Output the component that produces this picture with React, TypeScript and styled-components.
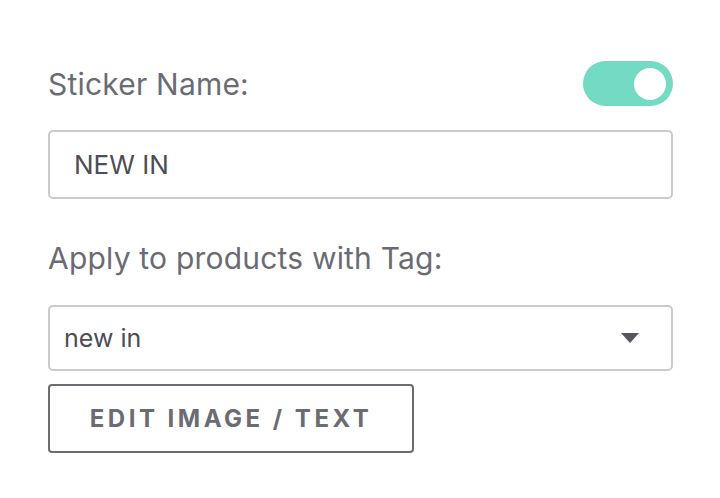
import React from "react";
import styled, { createGlobalStyle } from "styled-components";

const Global = createGlobalStyle`
  html, body { margin: 0; padding: 0; background: #ffffff; }
  body { font-family: Inter, "Noto Sans", sans-serif; }
`;

const Panel = styled.div`
  width: 625px;
  padding: 61px 0 0 48px;
  display: flex;
  flex-direction: column;
`;

const HeaderRow = styled.div`
  display: flex;
  align-items: center;
  justify-content: space-between;
  height: 45px;
`;

const Label = styled.div<{ $mt?: number }>`
  font-size: 30px;
  letter-spacing: 0.2px;
  color: #6b6b74;
  font-weight: 400;
  margin-top: ${(p) => p.$mt ?? 0}px;
  line-height: 34px;
`;

const Toggle = styled.div<{ $on: boolean }>`
  width: 90px;
  height: 45px;
  border-radius: 23px;
  background: ${(p) => (p.$on ? "#73dac4" : "#d0d0d0")};
  display: flex;
  align-items: center;
  justify-content: ${(p) => (p.$on ? "flex-end" : "flex-start")};
  padding: 0 7px;
  box-sizing: border-box;
`;

const Knob = styled.div`
  width: 32px;
  height: 32px;
  border-radius: 50%;
  background: #ffffff;
`;

const TextBox = styled.div`
  margin-top: 24px;
  height: 69px;
  box-sizing: border-box;
  border: 2px solid #cbcbcb;
  border-radius: 5px;
  display: flex;
  align-items: center;
  padding-left: 24px;
  font-size: 26px;
  color: #4b4d57;
`;

const Select = styled.div`
  margin-top: 30px;
  height: 66px;
  box-sizing: border-box;
  border: 2px solid #cbcbcb;
  border-radius: 5px;
  display: flex;
  align-items: center;
  justify-content: space-between;
  padding: 0 32px 0 14px;
  font-size: 25px;
  color: #4b4d57;
`;

const Button = styled.button`
  margin-top: 13px;
  width: 366px;
  height: 69px;
  box-sizing: border-box;
  border: 2px solid #6b6b72;
  border-radius: 4px;
  background: #ffffff;
  font-family: Inter, "Noto Sans", sans-serif;
  font-weight: 700;
  font-size: 24px;
  letter-spacing: 3.5px;
  color: #6b6b72;
  display: flex;
  align-items: center;
  justify-content: center;
  padding: 0;
`;

export default function App() {
  return (
    <>
      <Global />
      <Panel>
        <HeaderRow>
          <Label>Sticker Name:</Label>
          <Toggle $on>
            <Knob />
          </Toggle>
        </HeaderRow>
        <TextBox>NEW IN</TextBox>
        <Label $mt={42}>Apply to products with Tag:</Label>
        <Select>
          <span>new in</span>
          <svg width="18" height="10" viewBox="0 0 18 10">
            <path d="M0 0 H18 L9 10 Z" fill="#55565e" />
          </svg>
        </Select>
        <Button>EDIT IMAGE / TEXT</Button>
      </Panel>
    </>
  );
}
